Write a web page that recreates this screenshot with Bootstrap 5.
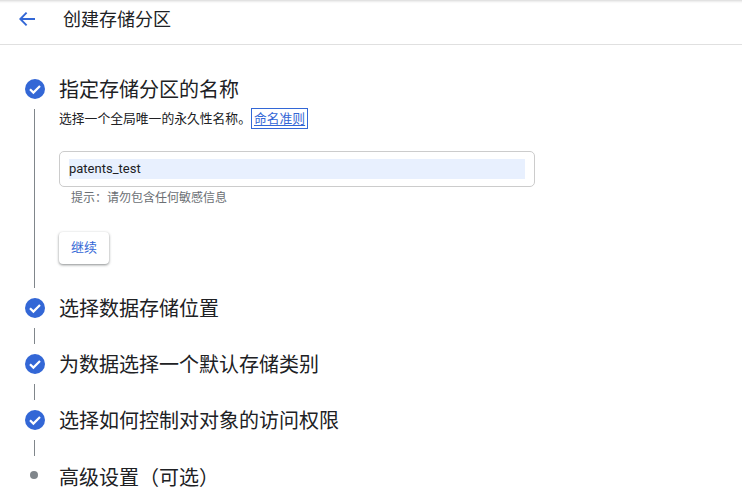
<!DOCTYPE html>
<html lang="zh">
<head>
<meta charset="utf-8">
<link href="https://cdn.jsdelivr.net/npm/bootstrap@5.3.0/dist/css/bootstrap.min.css" rel="stylesheet">
<style>
html,body{height:504px;overflow:hidden;background:#fff}
body{font-family:Roboto,"Noto Sans CJK SC",sans-serif;color:#202124}
.topbar{height:45px;border-bottom:1px solid #e0e0e0;padding:0 0 5px 19px;box-shadow:inset 0 4px 3px -3px rgba(0,0,0,.18)}
.topbar svg{width:16px;height:14px;display:block;margin-top:-1px}
.topbar-title{font-size:18px;line-height:24px;margin-left:28px;color:#202124}
.wiz{padding:33px 0 0 24px}
.stepcol{width:35px;flex:none}
.stepico{width:22px;height:22px;display:block}
.vline{width:1px;background:#80868b;margin-left:10px}
.vl-long{height:179px;margin-top:9px}
.vl-short{height:16px;margin-top:9px;margin-bottom:9px}
.first-step{height:219px}
.step-title{font-size:20px;line-height:22px;height:22px;padding-top:1px;box-sizing:content-box;color:#202124}
.stepline .step-title{padding-top:1px;height:21px}
.desc{font-size:12.8px;line-height:21px;height:21px;margin-top:7px;color:#202124}
.rulelink{border:1px solid #3367d6;color:#3367d6;padding:0 2px;display:inline-block;line-height:19px;text-decoration:underline;text-underline-offset:2px;text-decoration-thickness:1px}
.inputbox{width:476px;height:36px;margin-top:22px;border:1px solid #ccc;border-radius:5px;padding:7px 9px}
.inputfill{background:#e8f0fe;height:20px;font-size:13px;line-height:20px;color:#202124}
.hint{font-size:12px;line-height:16px;color:#6b6f74;padding-left:12px;margin-top:3px}
.gobtn{width:50px;height:32px;margin-top:26px;padding:0;font-size:13px;color:#3367d6;background:#fff;border:0;border-radius:4px;box-shadow:0 1px 3px rgba(60,64,67,.45),0 1px 2px rgba(60,64,67,.2)}
.gobtn:hover{color:#3367d6;background:#fff}
.stepline{height:22px}
.dotwrap{width:20px;height:22px}
.stepdot{width:8px;height:8px;border-radius:50%;background:#80868b}
.laststep{margin-top:-1px}
.laststep .step-title{padding-top:3px;height:19px}
</style>
</head>
<body>
<div class="topbar d-flex align-items-center">
<svg viewBox="0 0 16 14" fill="none" stroke="#3367d6" stroke-width="1.9"><path d="M16 7H1.5M7.6.7 1.3 7l6.3 6.3"/></svg>
<div class="topbar-title">创建存储分区</div>
</div>
<div class="wiz">
<div class="d-flex first-step">
<div class="stepcol">
<svg class="stepico" viewBox="0 0 22 22"><circle cx="11" cy="11" r="10" fill="#3367d6"/><path d="M6 11.2l3.4 3.4L16 8" fill="none" stroke="#fff" stroke-width="2.2"/></svg>
<div class="vline vl-long"></div>
</div>
<div>
<div class="step-title">指定存储分区的名称</div>
<div class="desc">选择一个全局唯一的永久性名称。<span class="rulelink">命名准则</span></div>
<div class="inputbox"><div class="inputfill">patents_test</div></div>
<div class="hint">提示：请勿包含任何敏感信息</div>
<button type="button" class="btn gobtn d-block">继续</button>
</div>
</div>
<div class="d-flex align-items-center stepline">
<div class="stepcol"><svg class="stepico" viewBox="0 0 22 22"><circle cx="11" cy="11" r="10" fill="#3367d6"/><path d="M6 11.2l3.4 3.4L16 8" fill="none" stroke="#fff" stroke-width="2.2"/></svg></div>
<div class="step-title">选择数据存储位置</div>
</div>
<div class="vline vl-short"></div>
<div class="d-flex align-items-center stepline">
<div class="stepcol"><svg class="stepico" viewBox="0 0 22 22"><circle cx="11" cy="11" r="10" fill="#3367d6"/><path d="M6 11.2l3.4 3.4L16 8" fill="none" stroke="#fff" stroke-width="2.2"/></svg></div>
<div class="step-title">为数据选择一个默认存储类别</div>
</div>
<div class="vline vl-short"></div>
<div class="d-flex align-items-center stepline">
<div class="stepcol"><svg class="stepico" viewBox="0 0 22 22"><circle cx="11" cy="11" r="10" fill="#3367d6"/><path d="M6 11.2l3.4 3.4L16 8" fill="none" stroke="#fff" stroke-width="2.2"/></svg></div>
<div class="step-title">选择如何控制对对象的访问权限</div>
</div>
<div class="vline vl-short"></div>
<div class="d-flex align-items-center stepline laststep">
<div class="stepcol"><div class="dotwrap d-flex align-items-center justify-content-center"><div class="stepdot"></div></div></div>
<div class="step-title">高级设置（可选）</div>
</div>
</div>
<script src="https://cdn.jsdelivr.net/npm/bootstrap@5.3.0/dist/js/bootstrap.bundle.min.js"></script>
</body>
</html>
